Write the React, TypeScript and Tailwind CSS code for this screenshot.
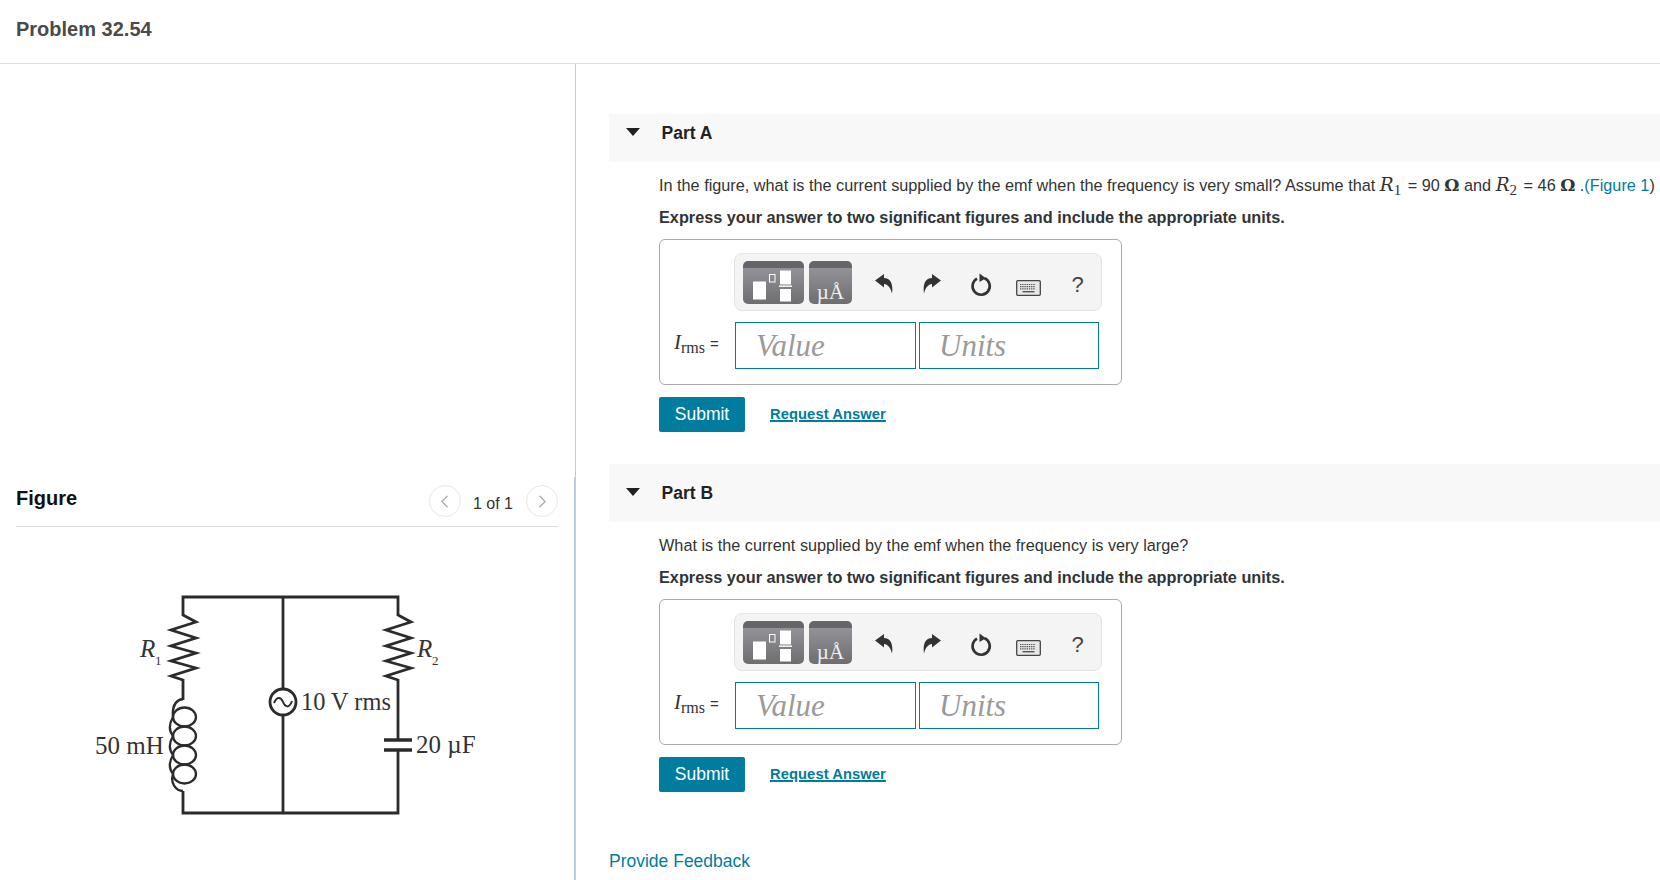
import { ReactNode } from "react";
import { ChevronLeft, ChevronRight } from "lucide-react";

const R = ({ n }: { n: number }) => (
  <span className="mr-[2px] font-['DejaVu_Serif',serif] leading-none text-[#333]">
    <i className="text-[18.5px] leading-none">R</i>
    <sub className="font-['Liberation_Serif',serif] text-[15px]">{n}</sub>
  </span>
);

const Ohm = () => <span className="font-['DejaVu_Serif',serif] text-[17px] font-bold leading-none">Ω</span>;

function TemplateIcon() {
  return (
    <svg width="62" height="43" viewBox="0 0 62 43" className="block">
      <rect x="10" y="20.5" width="13" height="18" fill="#fff" />
      <rect x="26.5" y="13.5" width="5.5" height="7.5" fill="none" stroke="#fff" strokeWidth="1" />
      <rect x="37" y="9.5" width="11" height="14" fill="#fff" />
      <rect x="36" y="24.5" width="13" height="1.4" fill="#fff" />
      <rect x="37" y="28" width="11" height="12.5" fill="#fff" />
    </svg>
  );
}

function ArrowIcon({ flip }: { flip?: boolean }) {
  return (
    <svg width="18" height="20" viewBox="0 0 18 20" className={flip ? "block -scale-x-100" : "block"}>
      <path d="M0 6.5 L9 0 V4 C15 4 18.5 9 17 19.5 C15.5 13.5 13 10.5 9 10 V13.5 Z" fill="#333" />
    </svg>
  );
}

function RefreshIcon() {
  return (
    <svg width="24" height="26" viewBox="0 0 24 26" className="block">
      <path d="M8 6.6 A8.6 8.6 0 1 0 15.5 6.2" fill="none" stroke="#333" strokeWidth="2.6" />
      <path d="M10.5 1.5 L16.8 6.2 L10.5 10 Z" fill="#333" />
    </svg>
  );
}

function KeyboardIcon() {
  return (
    <svg width="25" height="16" viewBox="0 0 25 16" className="block">
      <rect x="0.7" y="0.7" width="23.6" height="14.6" rx="1" fill="#e8e8e8" stroke="#444" strokeWidth="1.3" />
      <path d="M4 4.5h15.5M4 6.7h15.5M4 8.9h15.5" stroke="#555" strokeWidth="1.2" strokeDasharray="1.4 0.8" />
      <rect x="6.5" y="11" width="12" height="1.4" fill="#555" />
    </svg>
  );
}

function Toolbar() {
  return (
    <div className="flex h-[58px] w-[368px] items-center rounded-[8px] border border-[#e3e3e3] bg-[#f4f4f4] pl-[8px]">
      <div className="h-[43px] w-[61px] overflow-hidden rounded-[5px] border-t-[7px] border-[#66666a] bg-gradient-to-b from-[#929299] to-[#6e6e70]">
        <div className="-mt-[7px]"><TemplateIcon /></div>
      </div>
      <div className="ml-[5px] flex h-[43px] w-[43px] items-end justify-center overflow-hidden rounded-[5px] border-t-[7px] border-[#66666a] bg-gradient-to-b from-[#929299] to-[#6e6e70] font-['Liberation_Serif',serif] text-[21px] leading-[24px] text-[#f0f0f0]">
        µÅ
      </div>
      <div className="ml-[8px] flex w-[48px] justify-center pt-[4px]"><ArrowIcon /></div>
      <div className="flex w-[48px] justify-center pt-[4px]"><ArrowIcon flip /></div>
      <div className="flex w-[48px] justify-center pl-[1px] pt-[6px]"><RefreshIcon /></div>
      <div className="flex w-[48px] justify-center pt-[12px]"><KeyboardIcon /></div>
      <div className="flex w-[48px] justify-center pl-[3px] pt-[5px] text-[22px] leading-none text-[#444]">?</div>
    </div>
  );
}

function AnswerBox() {
  return (
    <div className="mt-[10px] h-[146px] w-[463px] rounded-[6px] border border-[#aaa] pl-[14px] pt-[13px]">
      <div className="ml-[60px]"><Toolbar /></div>
      <div className="mt-[11px] flex items-center">
        <div className="-mt-[6px] w-[61px] whitespace-nowrap font-['Liberation_Serif',serif] text-[#333]">
          <i className="text-[21px]">I</i>
          <sub className="text-[16px]">rms</sub>
          <span className="ml-[5px] font-['Liberation_Sans',sans-serif] text-[15px]">=</span>
        </div>
        <div className="flex h-[47px] w-[181px] items-center border border-[#007c9e] pl-[20px] pt-[2px] font-['Liberation_Serif',serif] text-[31px] italic text-[#9a9a9a]">Value</div>
        <div className="ml-[3px] flex h-[47px] w-[180px] items-center border border-[#007c9e] pl-[19px] pt-[2px] font-['Liberation_Serif',serif] text-[31px] italic text-[#9a9a9a]">Units</div>
      </div>
    </div>
  );
}

function Part({ title, text, barClass }: { title: string; text: ReactNode; barClass: string }) {
  return (
    <section>
      <div className={barClass}>
        <div className="flex items-center">
          <div className="ml-[17px] -mt-[2px] h-0 w-0 border-x-[7px] border-t-[8px] border-x-transparent border-t-[#222]" />
          <h2 className="ml-[21.5px] text-[17.5px] font-bold leading-6 text-[#222]">{title}</h2>
        </div>
      </div>
      <div className="pl-[50px] pt-[11px]">
        <p className="h-6 whitespace-nowrap text-[16.25px] leading-6 text-[#333]">{text}</p>
        <p className="mt-2 text-[16.25px] font-bold leading-6 text-[#333]">
          Express your answer to two significant figures and include the appropriate units.
        </p>
        <AnswerBox />
        <div className="mt-3 flex items-center">
          <button className="h-[35px] w-[86px] rounded-[2px] bg-[#007c9e] text-[17.5px] text-white">Submit</button>
          <a className="ml-[25px] text-[14.7px] font-bold tracking-[0.1px] text-[#007c9e] underline decoration-[1.5px]">Request Answer</a>
        </div>
      </div>
    </section>
  );
}

function Circuit() {
  const zig = (x: number) =>
    `M${x} 615 L${x + 13} 622 L${x - 12} 630 L${x + 13} 638 L${x - 12} 646 L${x + 13} 653 L${x - 12} 661 L${x + 13} 668 L${x - 12} 676 L${x} 680`;
  return (
    <svg width="400" height="230" viewBox="90 590 400 230" className="ml-[74px] mt-[63px] block">
      <g fill="none" stroke="#2b2b2b" strokeWidth="2.8">
        <path d="M183 616 V597 H398 V616 M398 679 V740 M398 750 V813 H183 V791 M183 679 V700" />
        <path d="M283 597 V813" />
        <path d={zig(183)} />
        <path d={zig(398)} />
        <g strokeWidth="2.3">
          <path d="M183 699 C176 700 172 706 173 717 C169 724 169 731 173 736 C169 743 169 750 173 755 C169 762 169 769 173 774 C170 783 176 791 183 791" />
          {[717, 736, 755, 774].map(c => (
            <ellipse key={c} cx="184.5" cy={c} rx="11.5" ry="9.5" />
          ))}
        </g>
        <path d="M384 740 H412 M384 750 H412" strokeWidth="3.6" />
        <circle cx="283" cy="702" r="13" fill="#fff" strokeWidth="2.8" />
        <path d="M274 703 C277 696 281 697 283 702 S289 709 292 701" strokeWidth="2" />
      </g>
      <g fontFamily="'Liberation Serif', serif" fill="#333" fontSize="25">
        <text x="140" y="657" fontStyle="italic">R</text>
        <text x="155" y="665" fontSize="13">1</text>
        <text x="417" y="657" fontStyle="italic">R</text>
        <text x="432" y="665" fontSize="13">2</text>
        <text x="95" y="754">50 mH</text>
        <text x="301" y="710" fontSize="24.4">10 V rms</text>
        <text x="416" y="753">20 µF</text>
      </g>
    </svg>
  );
}

export default function App() {
  return (
    <div className="h-[880px] overflow-hidden bg-white font-['Liberation_Sans',sans-serif]">
      <header className="flex h-[64px] items-start border-b border-[#ddd] pl-4 pt-[16px]">
        <h1 className="text-[20px] font-bold leading-[26px] text-[#4a4a4a]">Problem 32.54</h1>
      </header>
      <main className="flex h-[816px]">
        <aside className="flex w-[576px] shrink-0 flex-col">
          <div className="h-[413px] border-r border-[#b9cde5]" />
          <div className="flex-1 border-r-2 border-[#b9cde5] pl-4 pr-[16px]">
            <div className="flex h-[50px] items-start border-b border-[#ddd] pt-[8px]">
              <h2 className="text-[20px] font-bold leading-[26px] text-[#111]">Figure</h2>
              <div className="ml-auto flex items-center">
                <span className="flex h-[32px] w-[32px] items-center justify-center rounded-full border border-[#e8e8e8] text-[#aaa]"><ChevronLeft size={21} strokeWidth={1.5} /></span>
                <span className="ml-[12px] mr-[13px] mt-[5px] text-base text-[#333]">1 of 1</span>
                <span className="flex h-[32px] w-[32px] items-center justify-center rounded-full border border-[#e8e8e8] text-[#aaa]"><ChevronRight size={21} strokeWidth={1.5} /></span>
              </div>
            </div>
            <Circuit />
          </div>
        </aside>
        <div className="min-w-0 flex-1 pl-[33px] pt-[50px]">
          <Part
            title="Part A"
            barClass="h-[48px] bg-[#f8f8f8] pt-[7px]"
            text={
              <>
                In the figure, what is the current supplied by the emf when the frequency is very small? Assume that <R n={1} /> = 90 <Ohm /> and <R n={2} /> = 46 <Ohm /> .<span className="text-[#007c9e]">(Figure 1</span>)
              </>
            }
          />
          <div className="h-[32px]" />
          <Part
            title="Part B"
            barClass="h-[58px] bg-[#f8f8f8] pt-[17px]"
            text="What is the current supplied by the emf when the frequency is very large?"
          />
          <a className="mt-[57px] block text-[17.5px] leading-6 text-[#007c9e]">Provide Feedback</a>
        </div>
      </main>
    </div>
  );
}
